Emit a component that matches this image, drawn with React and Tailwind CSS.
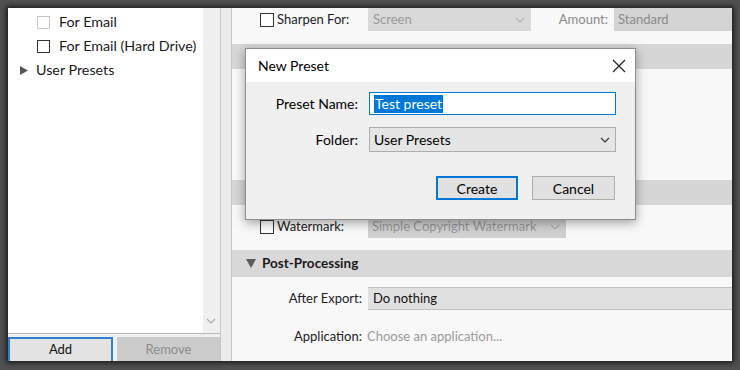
export default function App() {
  const Chevron = ({ color = "#444", w = 10 }) => (
    <svg width={w} height="6" viewBox="0 0 10 6" fill="none">
      <path d="M1 1 L5 5 L9 1" stroke={color} strokeWidth="1.1" />
    </svg>
  );
  return (
    <div className="relative h-[370px] w-[740px] overflow-hidden bg-[#505050] pt-[8px] pl-[8px] pr-[8px] pb-[9px] [font-family:Lato,'Liberation_Sans',sans-serif]">
      <div className="flex h-full w-full shadow-[0_0_5px_2px_rgba(0,0,0,0.65)]">
        {/* Left panel */}
        <div className="flex w-[212px] flex-col bg-[#f0f0f0]">
          <div className="flex h-[331px] border-b border-[#b9b9b9]">
            <div className="w-[195px] bg-white pt-[2px] text-[14.3px] text-[#1a1a1a]">
              <div className="flex h-[24px] items-center pl-[29px]">
                <div className="h-[13px] w-[13px] border border-[#c8c8c8] bg-white" />
                <span className="ml-[9px]">For Email</span>
              </div>
              <div className="flex h-[24px] items-center pl-[29px]">
                <div className="h-[13px] w-[13px] border border-[#333] bg-white" />
                <span className="ml-[9px]">For Email (Hard Drive)</span>
              </div>
              <div className="flex h-[24px] items-center pl-[12px]">
                <svg width="8" height="9" viewBox="0 0 8 9">
                  <path d="M0 0 L8 4.5 L0 9 Z" fill="#555" />
                </svg>
                <span className="ml-[8px]">User Presets</span>
              </div>
            </div>
            <div className="relative w-[17px] bg-[#f0f0f0]">
              <div className="absolute bottom-[9px] left-[3px]">
                <Chevron color="#a8a8a8" />
              </div>
            </div>
          </div>
          <div className="mt-[3px] flex gap-[4px] text-[13px]">
            <div className="flex h-[24px] w-[105px] items-start justify-center border-2 border-b-0 border-[#2f7fd0] bg-[#e3e3e3] pt-[1px] text-[#111]">
              Add
            </div>
            <div className="flex h-[24px] w-[103px] items-start justify-center bg-[#cbcbcb] pt-[3px] text-[#8c8c8c]">
              Remove
            </div>
          </div>
        </div>

        {/* Divider strip */}
        <div className="w-[12px] border-l border-r border-[#c6c6c6] bg-[#ebebeb]" />

        {/* Right panel */}
        <div className="flex flex-1 flex-col bg-[#f8f8f8] text-[13px] text-[#222]">
          <div className="flex h-[23px]">
            <div className="flex w-[136px] items-center pl-[28px]">
              <div className="h-[14px] w-[14px] border border-[#333] bg-white" />
              <span className="ml-[3px]">Sharpen For:</span>
            </div>
            <div className="flex w-[163px] items-center justify-between bg-[#d9d9d9] pl-[5px] pr-[6px] text-[#9a9a9a]">
              <span>Screen</span>
              <Chevron color="#b8b8b8" />
            </div>
            <div className="flex w-[83px] items-center justify-end pr-[6px] text-[#8a8a8a]">
              Amount:
            </div>
            <div className="flex flex-1 items-center bg-[#d4d4d4] pl-[4px] text-[#8a8a8a]">
              Standard
            </div>
          </div>
          <div className="h-[13px]" />
          <div className="h-[25px] bg-[#d6d6d6]" />
          <div className="h-[111px]" />
          <div className="h-[25px] bg-[#d6d6d6]" />
          <div className="h-[45px] pt-[11px]">
            <div className="flex h-[22px]">
              <div className="flex w-[136px] items-center pl-[28px]">
                <div className="h-[14px] w-[14px] border border-[#333] bg-white" />
                <span className="ml-[3px]">Watermark:</span>
              </div>
              <div className="flex w-[198px] items-center justify-between bg-[#d0d0d0] pl-[4px] pr-[6px] text-[#969696]">
                <span>Simple Copyright Watermark</span>
                <Chevron color="#aaaaaa" />
              </div>
            </div>
          </div>
          <div className="flex h-[27px] items-center bg-[#d8d8d8] pl-[14px]">
            <svg width="10" height="9" viewBox="0 0 10 9">
              <path d="M0 0 L10 0 L5 9 Z" fill="#5a5a5a" />
            </svg>
            <span className="ml-[6px] text-[13.5px] font-bold text-[#1a1a1a]">Post-Processing</span>
          </div>
          <div className="h-[10px]" />
          <div className="flex h-[23px]">
            <div className="flex w-[136px] items-center justify-end pr-[6px]">After Export:</div>
            <div className="flex flex-1 items-center border-y border-[#c2c2c2] bg-[#e0e0e0] pl-[5px] text-[#111]">
              Do nothing
            </div>
          </div>
          <div className="h-[18px]" />
          <div className="flex h-[18px] items-center">
            <div className="w-[136px] pr-[6px] text-right">Application:</div>
            <span className="ml-[-1px] text-[#9a9a9a]">Choose an application...</span>
          </div>
        </div>
      </div>

      {/* Dialog */}
      <div className="absolute left-[245px] top-[48px] flex h-[172px] w-[391px] flex-col border border-[#8c8c8c] bg-[#f0f0f0] text-[14px] text-[#000] shadow-[0_3px_10px_rgba(0,0,0,0.35)]">
        <div className="flex h-[33px] items-center justify-between bg-white pl-[12px] pr-[9px]">
          <span>New Preset</span>
          <svg width="14" height="14" viewBox="0 0 14 14">
            <path d="M1 1 L13 13 M13 1 L1 13" stroke="#222" strokeWidth="1.2" />
          </svg>
        </div>
        <div className="flex flex-col pt-[10px]">
          <div className="flex h-[23px] items-center">
            <div className="w-[112px] text-right">Preset Name:</div>
            <div className="ml-[11px] flex h-[23px] w-[247px] items-center border border-[#0078d7] bg-white pl-[4px]">
              <span className="bg-[#0078d7] px-[1px] leading-[18px] text-white">Test preset</span>
            </div>
          </div>
          <div className="mt-[12px] flex h-[25px] items-center">
            <div className="w-[112px] text-right">Folder:</div>
            <div className="ml-[11px] flex h-[25px] w-[247px] items-center justify-between border border-[#adadad] bg-[#e5e5e5] pl-[4px] pr-[5px]">
              <span>User Presets</span>
              <Chevron color="#333" />
            </div>
          </div>
          <div className="mt-[24px] flex justify-end gap-[14px] pr-[20px]">
            <div className="flex h-[24px] w-[82px] items-center justify-center border-2 border-[#0078d7] bg-[#e1e1e1]">
              Create
            </div>
            <div className="flex h-[24px] w-[83px] items-center justify-center border border-[#adadad] bg-[#e1e1e1]">
              Cancel
            </div>
          </div>
        </div>
      </div>
    </div>
  );
}
